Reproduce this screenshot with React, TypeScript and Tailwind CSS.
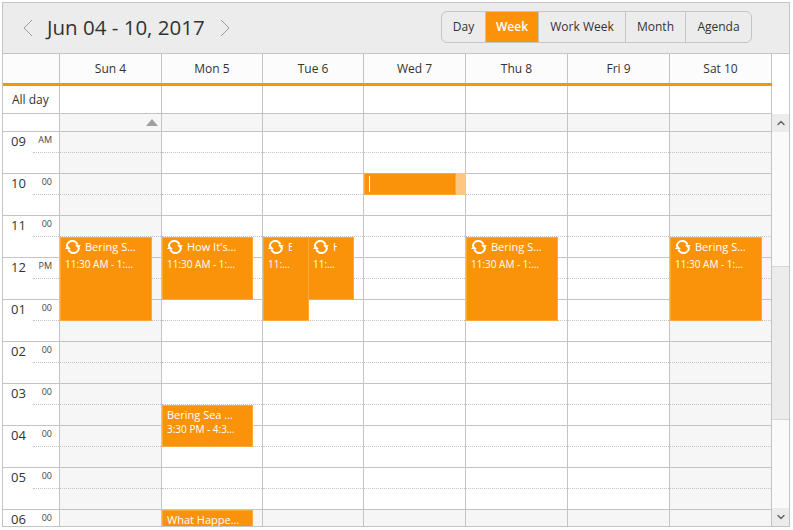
import React from 'react';
import { ChevronUp, ChevronDown } from 'lucide-react';

const font = { fontFamily: '"Open Sans", "Noto Sans", sans-serif' };

const days = [
  { label: 'Sun 4', width: 'w-[102px]', off: true },
  { label: 'Mon 5', width: 'w-[101px]', off: false },
  { label: 'Tue 6', width: 'w-[101px]', off: false },
  { label: 'Wed 7', width: 'w-[102px]', off: false },
  { label: 'Thu 8', width: 'w-[102px]', off: false },
  { label: 'Fri 9', width: 'w-[102px]', off: false },
  { label: 'Sat 10', width: 'w-[102px]', off: true },
];

const hours = [
  { h: '09', m: 'AM' },
  { h: '10', m: '00' },
  { h: '11', m: '00' },
  { h: '12', m: 'PM' },
  { h: '01', m: '00' },
  { h: '02', m: '00' },
  { h: '03', m: '00' },
  { h: '04', m: '00' },
  { h: '05', m: '00' },
  { h: '06', m: '00' },
];

const views = [
  { label: 'Day', width: 'w-[44px]' },
  { label: 'Week', width: 'w-[53px]' },
  { label: 'Work Week', width: 'w-[87px]' },
  { label: 'Month', width: 'w-[60px]' },
  { label: 'Agenda', width: 'w-[65px]' },
];

function Recur() {
  return (
    <svg width="16" height="14" viewBox="0 0 16 14" fill="none" className="flex-none">
      <path d="M1.9 6.6A5.4 5.4 0 0 1 12.4 4.6" stroke="white" strokeWidth="2" />
      <path d="M13.9 7.4A5.4 5.4 0 0 1 3.4 9.4" stroke="white" strokeWidth="2" />
      <path d="M10 5h5.8l-2.6 3.4z" fill="white" />
      <path d="M5.8 9H0l2.6-3.4z" fill="white" />
    </svg>
  );
}

type EvProps = {
  title: string;
  time: string;
  top: number;
  height: number;
  left: number;
  width: number;
  recur?: boolean;
};

function Event({ title, time, top, height, left, width, recur = true }: EvProps) {
  return (
    <div
      className="absolute z-10 overflow-hidden bg-[#fb930a] border border-[#fda93a] text-white pl-[4px]"
      style={{ top, height, left, width }}
    >
      {recur ? (
        <div className="flex items-center gap-[4px] h-[18px] text-[11px] overflow-hidden pr-[16px]">
          <Recur />
          <span className="whitespace-nowrap overflow-hidden">{title}</span>
        </div>
      ) : (
        <div className="mt-[1px] h-[15px] leading-[16px] text-[11px] whitespace-nowrap overflow-hidden">{title}</div>
      )}
      <div className={`text-[10px] leading-[14px] whitespace-nowrap overflow-hidden ${recur ? 'mt-[1px]' : ''}`}>
        {time}
      </div>
    </div>
  );
}

export default function App() {
  return (
    <div className="w-[793px] h-[530px] bg-white pl-[2px] pt-[2px] text-[#333]" style={font}>
      <div className="w-[788px] h-[525px] border border-[#c4c4c4] flex flex-col overflow-hidden">
        {/* toolbar */}
        <div className="h-[51px] flex-none bg-[#ececec] border-b border-[#c4c4c4] flex items-center">
          <div className="flex items-center pl-[20px]">
            <svg width="10" height="18" viewBox="0 0 10 18" fill="none">
              <path d="M9 1L1 9l8 8" stroke="#9a9a9a" strokeWidth="1" />
            </svg>
            <span className="text-[20.5px] leading-[28px] ml-[14px] mr-[15px] mt-[-2px] text-[#333] whitespace-nowrap">
              Jun 04 - 10, 2017
            </span>
            <svg width="10" height="18" viewBox="0 0 10 18" fill="none">
              <path d="M1 1l8 8-8 8" stroke="#9a9a9a" strokeWidth="1" />
            </svg>
          </div>
          <div className="ml-auto mr-[37px] flex h-[32px] border border-[#c4c4c4] rounded-[6px] overflow-hidden text-[12px] mt-[-2px]">
            {views.map((v, i) => (
              <div
                key={v.label}
                className={
                  v.label === 'Week'
                    ? `${v.width} flex items-center justify-center bg-[#fb930a] text-white font-semibold border-r border-[#c4c4c4]`
                    : i === views.length - 1
                      ? `${v.width} flex items-center justify-center`
                      : `${v.width} flex items-center justify-center border-r border-[#c4c4c4]`
                }
              >
                {v.label}
              </div>
            ))}
          </div>
        </div>

        <div className="flex flex-1 min-h-0">
          <div className="w-[769px] flex-none flex flex-col">
            {/* header */}
            <div className="flex h-[32px] flex-none border-b-[3px] border-[#fb930a] bg-[#fcfcfc]">
              <div className="w-[57px] border-r border-[#c4c4c4]" />
              {days.map((d) => (
                <div
                  key={d.label}
                  className={`${d.width} border-r border-[#c4c4c4] flex items-center justify-center text-[12px]`}
                >
                  {d.label}
                </div>
              ))}
            </div>
            {/* all day */}
            <div className="flex h-[28px] flex-none border-b border-[#c4c4c4]">
              <div className="w-[57px] border-r border-[#c4c4c4] text-[12px] pl-[9px] flex items-center whitespace-nowrap">
                All day
              </div>
              {days.map((d) => (
                <div key={d.label} className={`${d.width} border-r border-[#c4c4c4]`} />
              ))}
            </div>
            {/* collapse row */}
            <div className="flex h-[18px] flex-none border-b border-[#c4c4c4]">
              <div className="w-[57px] border-r border-[#c4c4c4]" />
              {days.map((d, i) => (
                <div
                  key={d.label}
                  className={`${d.width} border-r border-[#c4c4c4] bg-[#f6f6f6] flex items-center justify-end pr-[3px]`}
                >
                  {i === 0 && (
                    <div className="w-0 h-0 border-l-[6px] border-r-[6px] border-b-[7px] border-l-transparent border-r-transparent border-b-[#a0a0a0]" />
                  )}
                </div>
              ))}
            </div>
            {/* time grid */}
            <div className="flex-1 min-h-0 overflow-hidden flex">
              <div className="w-[57px] flex-none border-r border-[#c4c4c4]">
                {hours.map((r) => (
                  <div key={r.h} className="h-[42px] border-b border-[#c4c4c4] relative flex flex-col">
                    <div className="h-[21px] border-b border-dotted border-[#c4c4c4] ml-[30px] flex-none" />
                    <span className="absolute left-[8px] top-0 text-[13px] leading-[18px] text-[#333]">{r.h}</span>
                    <span className="absolute right-[7px] top-[1px] text-[9px] leading-[13px] text-[#444]">{r.m}</span>
                  </div>
                ))}
              </div>
              {days.map((d, di) => (
                <div key={d.label} className={`${d.width} flex-none border-r border-[#c4c4c4] relative`}>
                  {hours.map((r, ri) => (
                    <div
                      key={r.h}
                      className={`h-[42px] border-b border-[#c4c4c4] ${d.off || ri === 9 ? 'bg-[#f6f6f6]' : 'bg-white'}`}
                    >
                      <div className="h-[21px] border-b border-dotted border-[#c4c4c4]" />
                    </div>
                  ))}
                  {di === 0 && <Event title="Bering S…" time="11:30 AM - 1:…" top={105} height={84} left={0} width={92} />}
                  {di === 1 && (
                    <>
                      <Event title="How It's…" time="11:30 AM - 1:…" top={105} height={63} left={0} width={91} />
                      <Event title="Bering Sea …" time="3:30 PM - 4:3…" recur={false} top={273} height={42} left={0} width={91} />
                      <Event title="What Happe…" time="" recur={false} top={378} height={42} left={0} width={91} />
                    </>
                  )}
                  {di === 2 && (
                    <>
                      <Event title="Bering" time="11:…" top={105} height={84} left={0} width={46} />
                      <Event title="How" time="11:…" top={105} height={63} left={45} width={46} />
                    </>
                  )}
                  {di === 3 && (
                    <>
                      <div className="absolute z-10 top-[41px] left-0 h-[22px] w-[92px] bg-[#fb930a] border border-[#fda93a] pl-[4px] pt-[2px]">
                        <div className="w-px h-[16px] bg-white" />
                      </div>
                      <div className="absolute z-10 top-[41px] left-[92px] h-[22px] w-[10px] bg-[#fdc681]" />
                    </>
                  )}
                  {di === 4 && <Event title="Bering S…" time="11:30 AM - 1:…" top={105} height={84} left={0} width={92} />}
                  {di === 6 && <Event title="Bering S…" time="11:30 AM - 1:…" top={105} height={84} left={0} width={92} />}
                </div>
              ))}
            </div>
          </div>
          {/* scrollbar */}
          <div className="flex-1 flex flex-col">
            <div className="h-[60px] flex-none bg-white" />
            <div className="h-[18px] flex-none bg-[#ececec] flex items-center justify-center">
              <ChevronUp size={12} strokeWidth={3} className="text-[#666]" />
            </div>
            <div className="h-[134px] flex-none bg-[#fafafa]" />
            <div className="h-[154px] flex-none bg-[#ececec] border-y border-[#d6d6d6]" />
            <div className="flex-1 bg-[#fafafa]" />
            <div className="h-[18px] flex-none bg-[#ececec] flex items-center justify-center">
              <ChevronDown size={12} strokeWidth={3} className="text-[#666]" />
            </div>
          </div>
        </div>
      </div>
    </div>
  );
}
